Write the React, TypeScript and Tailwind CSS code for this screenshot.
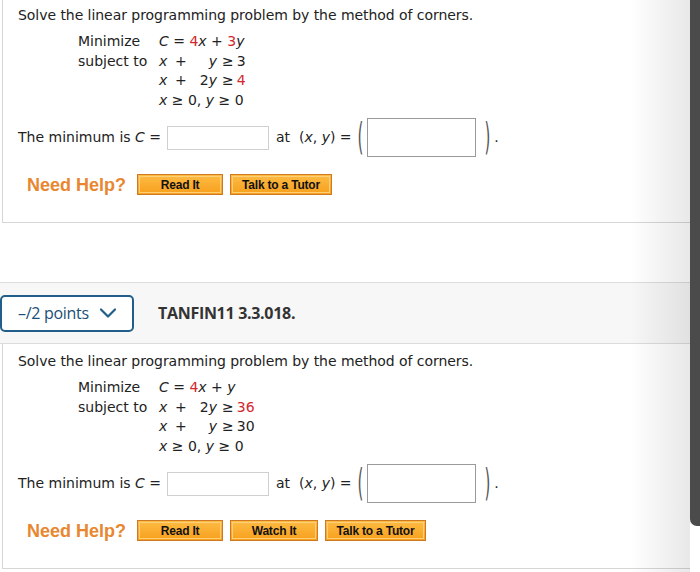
import React from 'react';

const RED = 'text-[#d3262d]';

type Row = { coef: React.ReactNode; rhs: React.ReactNode };

function Constraint({ coef, rhs }: Row) {
  return (
    <div className="flex">
      <span className="w-[14px] italic">x</span>
      <span className="w-[18px] pl-[2px]">+</span>
      <span className="w-[26px] text-right">{coef}</span>
      <span className="ml-[5px]">≥</span>
      <span className="ml-[3px]">{rhs}</span>
    </div>
  );
}

function HelpButton({ label, w }: { label: string; w: string }) {
  return (
    <button
      className={`${w} h-[21px] border border-[#cf7a22] bg-gradient-to-b from-[#fdbb42] to-[#f7a01a] p-[1px]`}
    >
      <div className="h-full w-full border border-[#fcd07a] flex items-center justify-center font-['Liberation_Sans',sans-serif] text-[12px] font-bold text-[#111] leading-none tracking-[-0.2px]">
        {label}
      </div>
    </button>
  );
}

function Paren({ ch }: { ch: string }) {
  return (
    <span className="inline-block scale-y-[2.5] text-[15px] leading-none text-[#555]">{ch}</span>
  );
}

function Problem({
  objective,
  rows,
  buttons,
  pt,
}: {
  objective: React.ReactNode;
  rows: Row[];
  buttons: { label: string; w: string }[];
  pt: string;
}) {
  return (
    <div className={`ml-[2px] border-l border-b border-[#d6d6d6] pl-[15px] ${pt} font-['DejaVu_Sans',sans-serif] text-[14px] text-[#222]`}>
      <div className="leading-[20px] tracking-[-0.05px]">Solve the linear programming problem by the method of corners.</div>
      <div className="mt-[7px] ml-[60px] flex leading-[19.5px]">
        <div className="w-[81px]">
          <div>Minimize</div>
          <div>subject to</div>
        </div>
        <div>
          <div>{objective}</div>
          {rows.map((r, i) => (
            <Constraint key={i} {...r} />
          ))}
          <div>
            <i>x</i> ≥ 0, <i>y</i> ≥ 0
          </div>
        </div>
      </div>
      <div className="mt-[8px] flex items-center h-[39px]">
        <span>
          The minimum is <i>C</i> =
        </span>
        <div className="ml-[6px] w-[102px] h-[24px] border border-[#d0d0d0] bg-white" />
        <span className="ml-[7px] whitespace-pre">
          at  (<i>x</i>, <i>y</i>) =
        </span>
        <span className="ml-[6px]">
          <Paren ch="(" />
        </span>
        <div className="ml-[4px] w-[109px] h-[39px] border border-[#9a9a9a] bg-white" />
        <span className="ml-[8px]">
          <Paren ch=")" />
        </span>
        <span className="ml-[4px]">.</span>
      </div>
      <div className="mt-[17px] pb-[27px] flex items-center">
        <span className="ml-[9px] font-['Liberation_Sans',sans-serif] text-[18px] font-bold text-[#e8872f] leading-none">
          Need Help?
        </span>
        <div className="ml-[11px] flex gap-[7px]">
          {buttons.map((b) => (
            <HelpButton key={b.label} {...b} />
          ))}
        </div>
      </div>
    </div>
  );
}

export default function App() {
  return (
    <div className="relative w-[700px] h-[572px] overflow-hidden bg-white">
      <div className="w-[690px]">
        <Problem
          pt="pt-[5px]"
          objective={
            <>
              <i>C</i> = <span className={RED}>4</span>
              <i>x</i> + <span className={RED}>3</span>
              <i>y</i>
            </>
          }
          rows={[
            { coef: <i>y</i>, rhs: '3' },
            { coef: <>2<i>y</i></>, rhs: <span className={RED}>4</span> },
          ]}
          buttons={[
            { label: 'Read It', w: 'w-[86px]' },
            { label: 'Talk to a Tutor', w: 'w-[102px]' },
          ]}
        />

        <div className="h-[59px]" />

        <div className="h-[62px] border-y border-[#dcdcdc] bg-[#f7f7f7] flex items-center font-['Open_Sans',sans-serif]">
          <button className="w-[134px] h-[37px] rounded-[5px] border-2 border-[#215f8a] bg-white flex items-center pl-[16px] text-[16px] text-[#1c4f75] tracking-[-0.3px]">
            <span>–/2 points</span>
            <svg className="ml-[10px]" width="18" height="12" viewBox="0 0 18 12" fill="none">
              <path d="M2 2.5 L9 9.5 L16 2.5" stroke="#215f8a" strokeWidth="2.2" strokeLinecap="round" strokeLinejoin="round" />
            </svg>
          </button>
          <span className="ml-[24px] text-[16px] font-bold text-[#333] tracking-[-0.3px]">TANFIN11 3.3.018.</span>
        </div>

        <Problem
          pt="pt-[7px]"
          objective={
            <>
              <i>C</i> = <span className={RED}>4</span>
              <i>x</i> + <i>y</i>
            </>
          }
          rows={[
            { coef: <>2<i>y</i></>, rhs: <span className={RED}>36</span> },
            { coef: <i>y</i>, rhs: '30' },
          ]}
          buttons={[
            { label: 'Read It', w: 'w-[86px]' },
            { label: 'Watch It', w: 'w-[88px]' },
            { label: 'Talk to a Tutor', w: 'w-[101px]' },
          ]}
        />
      </div>

      {/* right edge shadow and window bar */}
      <div className="pointer-events-none absolute top-0 right-[10px] w-[60px] h-full bg-gradient-to-r from-transparent to-black/[0.09]" />
      <div className="absolute top-0 right-0 w-[10px] h-[526px] bg-[#4b4b4b] rounded-bl-[7px]" />
    </div>
  );
}
